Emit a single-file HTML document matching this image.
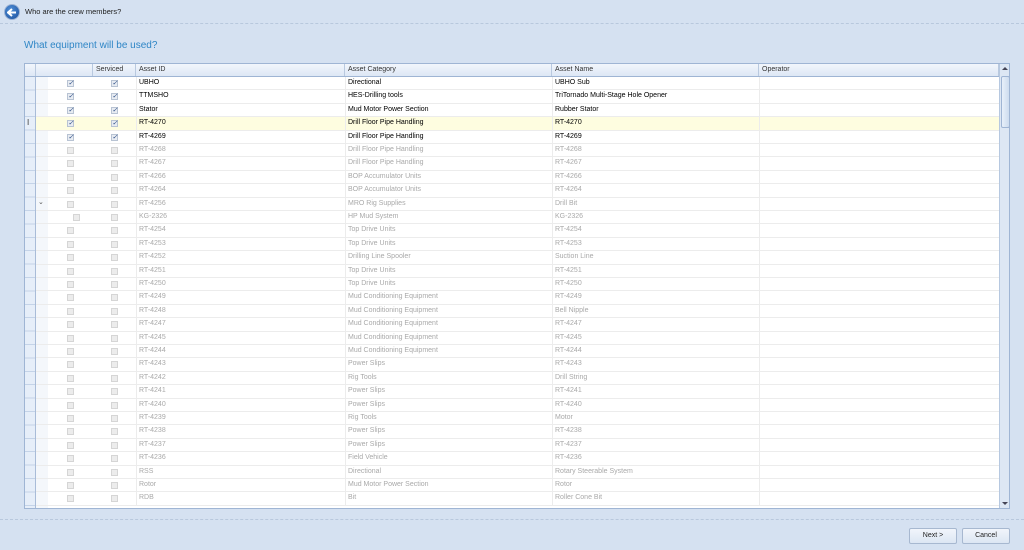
<!DOCTYPE html>
<html><head><meta charset="utf-8"><style>
*{margin:0;padding:0;box-sizing:border-box}
body{width:1024px;height:550px;background:#d5e1f1;font-family:"Liberation Sans",sans-serif;position:relative;overflow:hidden}
.top{position:absolute;left:0;top:0;width:1024px;height:24px;border-bottom:1px dashed #b8c8dd}
.back{position:absolute;left:4px;top:4px;width:16px;height:16px;border-radius:50%;background:radial-gradient(circle at 40% 35%,#4f8fd8,#1a4e9a);border:1px solid #9bb2d4}
.top .t{position:absolute;left:25px;top:7px;font-size:7.5px;color:#222}
h1{position:absolute;left:24px;top:40px;font-size:10px;font-weight:normal;color:#2f86c6}
.grid{position:absolute;left:24px;top:63px;width:986px;height:446px;background:#fff;border:1px solid #9fb5d4;overflow:hidden}
.hdr{position:absolute;left:0;top:0;height:13px;width:974px;background:linear-gradient(#f2f6fc,#dde7f5);border-bottom:1px solid #9fb5d4}
.hdr div{position:absolute;top:0;height:12px;border-right:1px solid #b9c9df;font-size:7px;color:#333;padding:2px 3px}
.ind{position:absolute;left:0;top:13px;width:11px;height:440px;background:repeating-linear-gradient(#e6eef9 0,#e6eef9 12.4px,#c4d3e8 12.4px,#c4d3e8 13.4px);border-right:1px solid #a9bcd8}
.r{position:absolute;left:11px;width:963px;height:13.4px;border-bottom:1px solid #ececec;font-size:7px;line-height:12.4px}
.r span{position:absolute;top:0;height:13px;padding-left:2px;white-space:nowrap;border-left:1px solid #ececec}
.r .a{left:100px}.r .b{left:309px}.r .c{left:516px}.r .d{left:723px}
.r .cb1,.r .cb2{position:absolute;top:3px;width:7px;height:7px;border:1px solid #b8c3d3;background:#e8ecf2;font-size:7px;line-height:6px;text-align:center;color:#2d4f86}
.cb1{left:31px}.cb2{left:75px}
.g{color:#a9a9a9}.g .cb1,.g .cb2{background:#ececec;border-color:#d5d5d5}
.k{color:#000}
.y{background:#fefde0}
.sb{position:absolute;left:974px;top:0;width:11px;height:444px;background:#dde7f4;border-left:1px solid #b6c8e0}
.thumb{position:absolute;left:1px;top:12px;width:9px;height:52px;background:linear-gradient(90deg,#e8f0fa,#cddcef);border:1px solid #9fb5d4;border-radius:2px}
.bot{position:absolute;left:0;top:519px;width:1024px;border-top:1px dashed #b8c8dd}
.btn{position:absolute;top:528px;height:16px;width:48px;border:1px solid #a7b8d0;border-radius:2px;background:linear-gradient(#f1f5fb,#dce6f3);font-size:7px;text-align:center;line-height:14px;color:#222}
</style></head><body>
<div class="top"><div class="back"></div><svg style="position:absolute;left:7px;top:8px" width="10" height="9" viewBox="0 0 10 9"><path d="M5 1 L1 4.5 L5 8 M1 4.5 H9" stroke="#fff" stroke-width="2" fill="none"/></svg><div class="t">Who are the crew members?</div></div>
<h1>What equipment will be used?</h1>
<div class="grid">
<div class="hdr"><div style="left:0;width:11px"></div><div style="left:11px;width:57px"></div><div style="left:68px;width:43px">Serviced</div><div style="left:111px;width:209px">Asset ID</div><div style="left:320px;width:207px">Asset Category</div><div style="left:527px;width:207px">Asset Name</div><div style="left:734px;width:240px">Operator</div></div>
<div class="ind"></div>
<div style="position:absolute;left:11px;top:13px;width:12px;height:440px;background:#f4f7fb"></div>
<div class="r k" style="top:13px"><i class="cb1">✓</i><i class="cb2">✓</i><span class="a">UBHO</span><span class="b">Directional</span><span class="c">UBHO Sub</span><span class="d"></span></div>
<div class="r k" style="top:26.4px"><i class="cb1">✓</i><i class="cb2">✓</i><span class="a">TTMSHO</span><span class="b">HES-Drilling tools</span><span class="c">TriTornado Multi-Stage Hole Opener</span><span class="d"></span></div>
<div class="r k" style="top:39.8px"><i class="cb1">✓</i><i class="cb2">✓</i><span class="a">Stator</span><span class="b">Mud Motor Power Section</span><span class="c">Rubber Stator</span><span class="d"></span></div>
<div class="r k y" style="top:53.2px"><i class="cb1">✓</i><i class="cb2">✓</i><span class="a">RT-4270</span><span class="b">Drill Floor Pipe Handling</span><span class="c">RT-4270</span><span class="d"></span></div>
<div style="position:absolute;left:2px;top:54px;font-size:8px;color:#333">I</div>
<div class="r k" style="top:66.6px"><i class="cb1">✓</i><i class="cb2">✓</i><span class="a">RT-4269</span><span class="b">Drill Floor Pipe Handling</span><span class="c">RT-4269</span><span class="d"></span></div>
<div class="r g" style="top:80px"><i class="cb1"></i><i class="cb2"></i><span class="a">RT-4268</span><span class="b">Drill Floor Pipe Handling</span><span class="c">RT-4268</span><span class="d"></span></div>
<div class="r g" style="top:93.4px"><i class="cb1"></i><i class="cb2"></i><span class="a">RT-4267</span><span class="b">Drill Floor Pipe Handling</span><span class="c">RT-4267</span><span class="d"></span></div>
<div class="r g" style="top:106.8px"><i class="cb1"></i><i class="cb2"></i><span class="a">RT-4266</span><span class="b">BOP Accumulator Units</span><span class="c">RT-4266</span><span class="d"></span></div>
<div class="r g" style="top:120.2px"><i class="cb1"></i><i class="cb2"></i><span class="a">RT-4264</span><span class="b">BOP Accumulator Units</span><span class="c">RT-4264</span><span class="d"></span></div>
<div class="r g" style="top:133.6px"><i class="cb1"></i><i class="cb2"></i><span class="a">RT-4256</span><span class="b">MRO Rig Supplies</span><span class="c">Drill Bit</span><span class="d"></span></div>
<div style="position:absolute;left:13px;top:134px;font-size:7px;color:#555">⌄</div>
<div class="r g" style="top:147px"><i class="cb1" style="left:37px"></i><i class="cb2"></i><span class="a">KG-2326</span><span class="b">HP Mud System</span><span class="c">KG-2326</span><span class="d"></span></div>
<div class="r g" style="top:160.4px"><i class="cb1"></i><i class="cb2"></i><span class="a">RT-4254</span><span class="b">Top Drive Units</span><span class="c">RT-4254</span><span class="d"></span></div>
<div class="r g" style="top:173.8px"><i class="cb1"></i><i class="cb2"></i><span class="a">RT-4253</span><span class="b">Top Drive Units</span><span class="c">RT-4253</span><span class="d"></span></div>
<div class="r g" style="top:187.2px"><i class="cb1"></i><i class="cb2"></i><span class="a">RT-4252</span><span class="b">Drilling Line Spooler</span><span class="c">Suction Line</span><span class="d"></span></div>
<div class="r g" style="top:200.6px"><i class="cb1"></i><i class="cb2"></i><span class="a">RT-4251</span><span class="b">Top Drive Units</span><span class="c">RT-4251</span><span class="d"></span></div>
<div class="r g" style="top:214px"><i class="cb1"></i><i class="cb2"></i><span class="a">RT-4250</span><span class="b">Top Drive Units</span><span class="c">RT-4250</span><span class="d"></span></div>
<div class="r g" style="top:227.4px"><i class="cb1"></i><i class="cb2"></i><span class="a">RT-4249</span><span class="b">Mud Conditioning Equipment</span><span class="c">RT-4249</span><span class="d"></span></div>
<div class="r g" style="top:240.8px"><i class="cb1"></i><i class="cb2"></i><span class="a">RT-4248</span><span class="b">Mud Conditioning Equipment</span><span class="c">Bell Nipple</span><span class="d"></span></div>
<div class="r g" style="top:254.2px"><i class="cb1"></i><i class="cb2"></i><span class="a">RT-4247</span><span class="b">Mud Conditioning Equipment</span><span class="c">RT-4247</span><span class="d"></span></div>
<div class="r g" style="top:267.6px"><i class="cb1"></i><i class="cb2"></i><span class="a">RT-4245</span><span class="b">Mud Conditioning Equipment</span><span class="c">RT-4245</span><span class="d"></span></div>
<div class="r g" style="top:281px"><i class="cb1"></i><i class="cb2"></i><span class="a">RT-4244</span><span class="b">Mud Conditioning Equipment</span><span class="c">RT-4244</span><span class="d"></span></div>
<div class="r g" style="top:294.4px"><i class="cb1"></i><i class="cb2"></i><span class="a">RT-4243</span><span class="b">Power Slips</span><span class="c">RT-4243</span><span class="d"></span></div>
<div class="r g" style="top:307.8px"><i class="cb1"></i><i class="cb2"></i><span class="a">RT-4242</span><span class="b">Rig Tools</span><span class="c">Drill String</span><span class="d"></span></div>
<div class="r g" style="top:321.2px"><i class="cb1"></i><i class="cb2"></i><span class="a">RT-4241</span><span class="b">Power Slips</span><span class="c">RT-4241</span><span class="d"></span></div>
<div class="r g" style="top:334.6px"><i class="cb1"></i><i class="cb2"></i><span class="a">RT-4240</span><span class="b">Power Slips</span><span class="c">RT-4240</span><span class="d"></span></div>
<div class="r g" style="top:348px"><i class="cb1"></i><i class="cb2"></i><span class="a">RT-4239</span><span class="b">Rig Tools</span><span class="c">Motor</span><span class="d"></span></div>
<div class="r g" style="top:361.4px"><i class="cb1"></i><i class="cb2"></i><span class="a">RT-4238</span><span class="b">Power Slips</span><span class="c">RT-4238</span><span class="d"></span></div>
<div class="r g" style="top:374.8px"><i class="cb1"></i><i class="cb2"></i><span class="a">RT-4237</span><span class="b">Power Slips</span><span class="c">RT-4237</span><span class="d"></span></div>
<div class="r g" style="top:388.2px"><i class="cb1"></i><i class="cb2"></i><span class="a">RT-4236</span><span class="b">Field Vehicle</span><span class="c">RT-4236</span><span class="d"></span></div>
<div class="r g" style="top:401.6px"><i class="cb1"></i><i class="cb2"></i><span class="a">RSS</span><span class="b">Directional</span><span class="c">Rotary Steerable System</span><span class="d"></span></div>
<div class="r g" style="top:415px"><i class="cb1"></i><i class="cb2"></i><span class="a">Rotor</span><span class="b">Mud Motor Power Section</span><span class="c">Rotor</span><span class="d"></span></div>
<div class="r g" style="top:428.4px"><i class="cb1"></i><i class="cb2"></i><span class="a">RDB</span><span class="b">Bit</span><span class="c">Roller Cone Bit</span><span class="d"></span></div>
<div class="sb"><div style="position:absolute;left:2px;top:3px;width:0;height:0;border:3px solid transparent;border-bottom:3px solid #445;border-top:0"></div><div class="thumb"></div><div style="position:absolute;left:2px;bottom:3px;width:0;height:0;border:3px solid transparent;border-top:3px solid #445;border-bottom:0"></div></div>
</div>
<div class="bot"></div>
<div class="btn" style="left:909px">Next &gt;</div>
<div class="btn" style="left:962px">Cancel</div>
</body></html>
